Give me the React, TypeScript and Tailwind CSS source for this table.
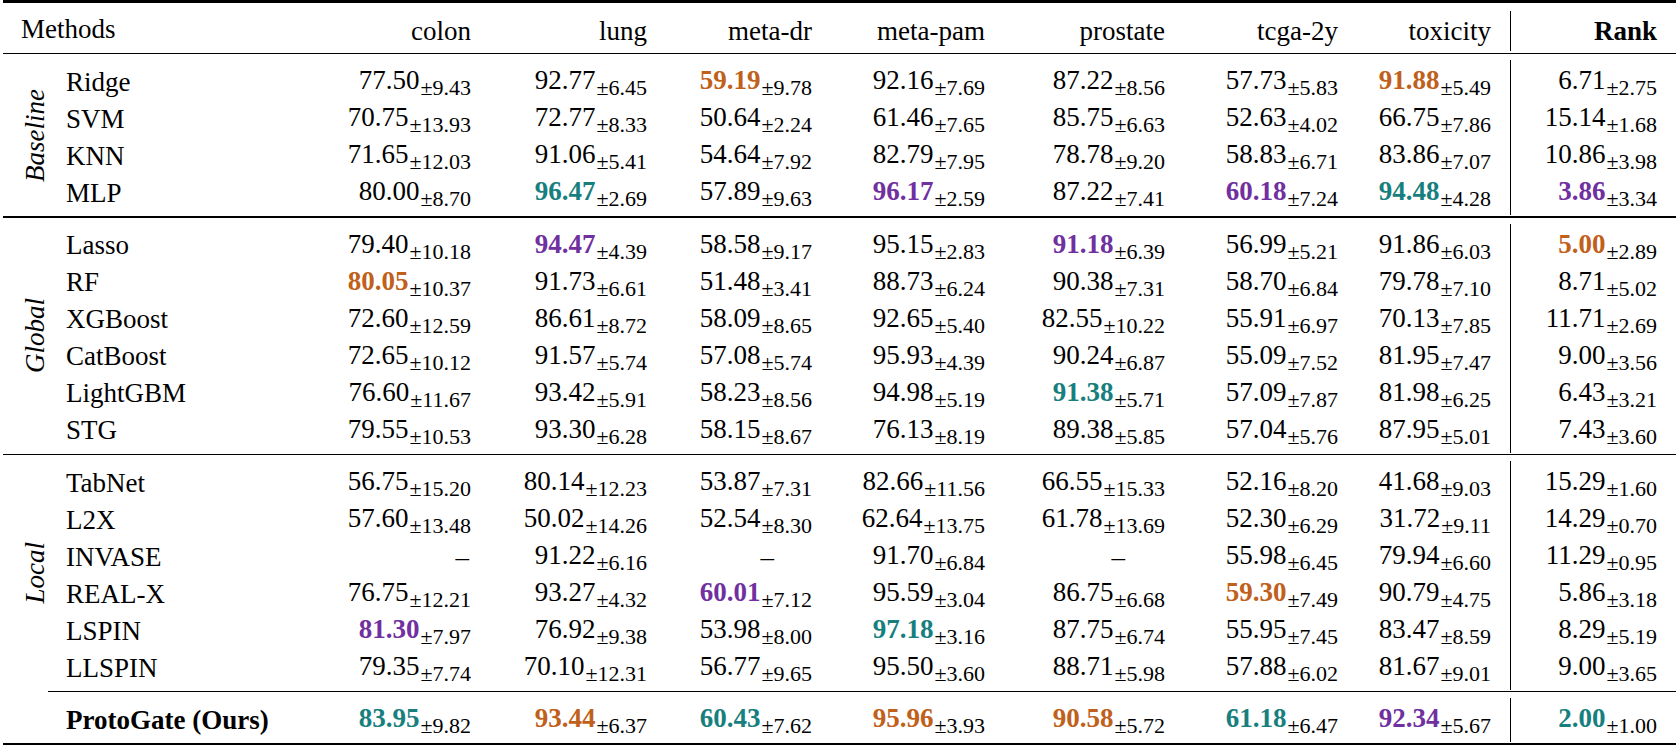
type Tone = 'o' | 't' | 'p'
type Val = [string, string, Tone?] | null

const tone: Record<Tone, string> = {
  o: 'font-bold text-[#c0601a]',
  t: 'font-bold text-[#17807e]',
  p: 'font-bold text-[#7030a0]',
}

const cols = 'grid grid-cols-[200px_205px_176px_165px_173px_180px_173px_153px_19px_147px]'

const headers = ['colon', 'lung', 'meta-dr', 'meta-pam', 'prostate', 'tcga-2y', 'toxicity']

// padding for the "–" cells, per column
const dashPad = ['pr-[2px]', 'pr-[40px]', 'pr-[38px]', 'pr-[40px]', 'pr-[40px]', 'pr-[40px]', 'pr-[40px]']

interface Row {
  name: string
  vals: Val[]
  rank: Val
}

const baseline: Row[] = [
  { name: 'Ridge', vals: [['77.50', '9.43'], ['92.77', '6.45'], ['59.19', '9.78', 'o'], ['92.16', '7.69'], ['87.22', '8.56'], ['57.73', '5.83'], ['91.88', '5.49', 'o']], rank: ['6.71', '2.75'] },
  { name: 'SVM', vals: [['70.75', '13.93'], ['72.77', '8.33'], ['50.64', '2.24'], ['61.46', '7.65'], ['85.75', '6.63'], ['52.63', '4.02'], ['66.75', '7.86']], rank: ['15.14', '1.68'] },
  { name: 'KNN', vals: [['71.65', '12.03'], ['91.06', '5.41'], ['54.64', '7.92'], ['82.79', '7.95'], ['78.78', '9.20'], ['58.83', '6.71'], ['83.86', '7.07']], rank: ['10.86', '3.98'] },
  { name: 'MLP', vals: [['80.00', '8.70'], ['96.47', '2.69', 't'], ['57.89', '9.63'], ['96.17', '2.59', 'p'], ['87.22', '7.41'], ['60.18', '7.24', 'p'], ['94.48', '4.28', 't']], rank: ['3.86', '3.34', 'p'] },
]

const global: Row[] = [
  { name: 'Lasso', vals: [['79.40', '10.18'], ['94.47', '4.39', 'p'], ['58.58', '9.17'], ['95.15', '2.83'], ['91.18', '6.39', 'p'], ['56.99', '5.21'], ['91.86', '6.03']], rank: ['5.00', '2.89', 'o'] },
  { name: 'RF', vals: [['80.05', '10.37', 'o'], ['91.73', '6.61'], ['51.48', '3.41'], ['88.73', '6.24'], ['90.38', '7.31'], ['58.70', '6.84'], ['79.78', '7.10']], rank: ['8.71', '5.02'] },
  { name: 'XGBoost', vals: [['72.60', '12.59'], ['86.61', '8.72'], ['58.09', '8.65'], ['92.65', '5.40'], ['82.55', '10.22'], ['55.91', '6.97'], ['70.13', '7.85']], rank: ['11.71', '2.69'] },
  { name: 'CatBoost', vals: [['72.65', '10.12'], ['91.57', '5.74'], ['57.08', '5.74'], ['95.93', '4.39'], ['90.24', '6.87'], ['55.09', '7.52'], ['81.95', '7.47']], rank: ['9.00', '3.56'] },
  { name: 'LightGBM', vals: [['76.60', '11.67'], ['93.42', '5.91'], ['58.23', '8.56'], ['94.98', '5.19'], ['91.38', '5.71', 't'], ['57.09', '7.87'], ['81.98', '6.25']], rank: ['6.43', '3.21'] },
  { name: 'STG', vals: [['79.55', '10.53'], ['93.30', '6.28'], ['58.15', '8.67'], ['76.13', '8.19'], ['89.38', '5.85'], ['57.04', '5.76'], ['87.95', '5.01']], rank: ['7.43', '3.60'] },
]

const local: Row[] = [
  { name: 'TabNet', vals: [['56.75', '15.20'], ['80.14', '12.23'], ['53.87', '7.31'], ['82.66', '11.56'], ['66.55', '15.33'], ['52.16', '8.20'], ['41.68', '9.03']], rank: ['15.29', '1.60'] },
  { name: 'L2X', vals: [['57.60', '13.48'], ['50.02', '14.26'], ['52.54', '8.30'], ['62.64', '13.75'], ['61.78', '13.69'], ['52.30', '6.29'], ['31.72', '9.11']], rank: ['14.29', '0.70'] },
  { name: 'INVASE', vals: [null, ['91.22', '6.16'], null, ['91.70', '6.84'], null, ['55.98', '6.45'], ['79.94', '6.60']], rank: ['11.29', '0.95'] },
  { name: 'REAL-X', vals: [['76.75', '12.21'], ['93.27', '4.32'], ['60.01', '7.12', 'p'], ['95.59', '3.04'], ['86.75', '6.68'], ['59.30', '7.49', 'o'], ['90.79', '4.75']], rank: ['5.86', '3.18'] },
  { name: 'LSPIN', vals: [['81.30', '7.97', 'p'], ['76.92', '9.38'], ['53.98', '8.00'], ['97.18', '3.16', 't'], ['87.75', '6.74'], ['55.95', '7.45'], ['83.47', '8.59']], rank: ['8.29', '5.19'] },
  { name: 'LLSPIN', vals: [['79.35', '7.74'], ['70.10', '12.31'], ['56.77', '9.65'], ['95.50', '3.60'], ['88.71', '5.98'], ['57.88', '6.02'], ['81.67', '9.01']], rank: ['9.00', '3.65'] },
]

const ours: Row = {
  name: 'ProtoGate (Ours)',
  vals: [['83.95', '9.82', 't'], ['93.44', '6.37', 'o'], ['60.43', '7.62', 't'], ['95.96', '3.93', 'o'], ['90.58', '5.72', 'o'], ['61.18', '6.47', 't'], ['92.34', '5.67', 'p']],
  rank: ['2.00', '1.00', 't'],
}

function Num({ v }: { v: [string, string, Tone?] }) {
  return (
    <span className="whitespace-nowrap">
      <span className={v[2] ? tone[v[2]] : ''}>{v[0]}</span>
      <span className="text-[22px] align-[-6px] ml-px">±{v[1]}</span>
    </span>
  )
}

function DataRow({ row, bold }: { row: Row; bold?: boolean }) {
  return (
    <div className={`${cols} h-[37px] items-center`}>
      <div className={`whitespace-nowrap ${bold ? 'font-bold' : ''}`}>{row.name}</div>
      {row.vals.map((v, i) => (
        <div key={i} className={`text-right whitespace-nowrap ${v ? '' : dashPad[i]}`}>
          {v ? <Num v={v} /> : '–'}
        </div>
      ))}
      <div />
      <div className="h-full border-l border-black flex items-center justify-end">
        <div>{row.rank && <Num v={row.rank} />}</div>
      </div>
    </div>
  )
}

function Section({ label, rows }: { label: string; rows: Row[] }) {
  return (
    <div className="flex">
      <div className="w-[63px] shrink-0 flex items-center pl-[19px]">
        <span className="italic leading-none [writing-mode:vertical-rl] rotate-180">{label}</span>
      </div>
      <div className="pt-[6px] pb-[8px]">
        {rows.map(r => (
          <DataRow key={r.name} row={r} />
        ))}
      </div>
    </div>
  )
}

export default function App() {
  return (
    <div className="w-[1679px] h-[745px] bg-white overflow-hidden font-[family-name:'Liberation_Serif',serif] text-[27px] text-black">
      <div className="mx-[3px]">
        <div className="h-[2.5px] bg-black" />

        {/* header */}
        <div className="pt-[8px] pb-[5px]">
          <div className="flex h-[37px] items-center">
            <div className="w-[263px] pl-[18px]">Methods</div>
            <div className="grid grid-cols-[205px_176px_165px_173px_180px_173px_153px_19px_147px] h-full items-center">
              {headers.map(h => (
                <div key={h} className="text-right">{h}</div>
              ))}
              <div />
              <div className="h-full border-l border-black flex items-center justify-end font-bold">Rank</div>
            </div>
          </div>
        </div>
        <div className="h-[1.5px] bg-black" />

        <Section label="Baseline" rows={baseline} />
        <div className="h-[1.5px] bg-black" />

        <Section label="Global" rows={global} />
        <div className="h-[1.5px] bg-black" />

        <Section label="Local" rows={local} />
        <div className="ml-[45px] h-px bg-black" />

        <div className="flex">
          <div className="w-[63px] shrink-0" />
          <div className="pt-[6px] pb-[8px]">
            <DataRow row={ours} bold />
          </div>
        </div>
        <div className="h-[2.5px] bg-black" />
      </div>
    </div>
  )
}
